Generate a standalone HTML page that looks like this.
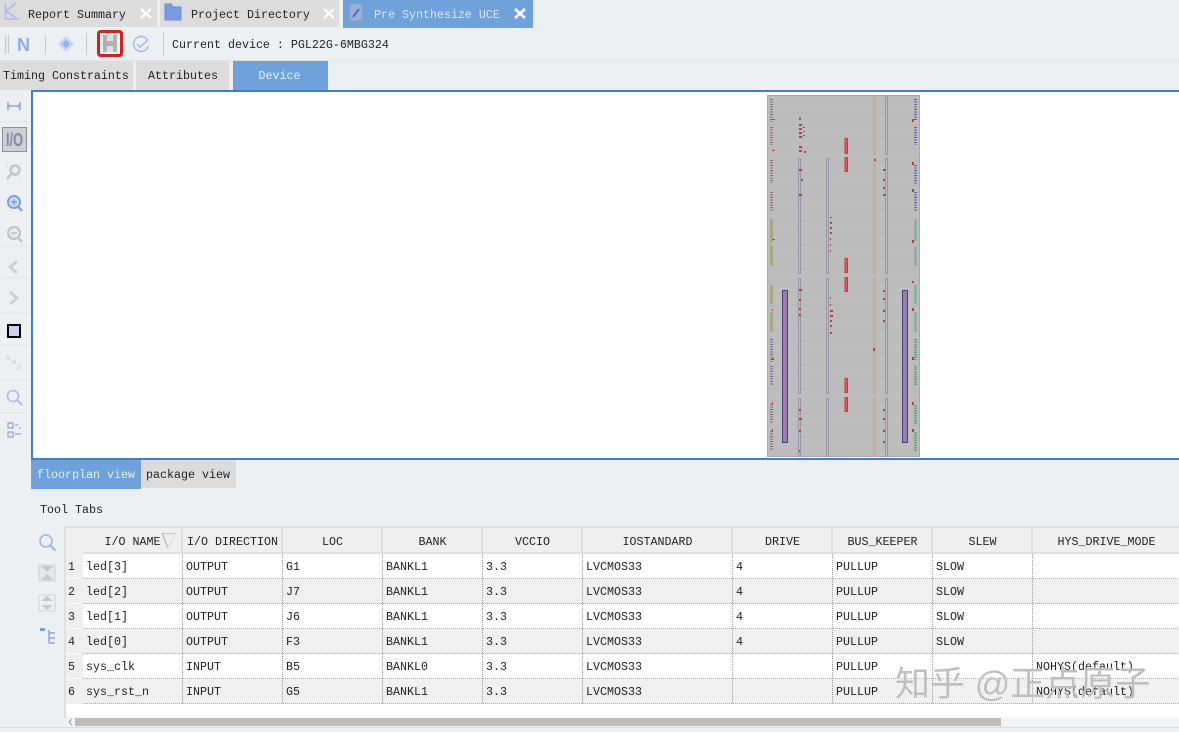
<!DOCTYPE html>
<html><head><meta charset="utf-8"><style>
html,body{margin:0;padding:0}
body{width:1179px;height:732px;position:relative;overflow:hidden;background:#ecf0f3;font:11.67px "Liberation Mono",monospace;color:#222}
div{position:absolute;box-sizing:border-box;white-space:pre}
.t{line-height:18px}
.tab{background:#dcdcdc}
.blue{background:#6fa2da;color:#e6eef8}
.h{height:26px;top:528px;line-height:29px;padding-left:1px;text-align:center;background:#efefef;border-right:2px solid #e0e0e0;border-bottom:2px solid #dfdfdf}
</style></head><body>
<!-- top tabs -->
<div class="tab" style="left:0;top:0;width:157px;height:27px"></div>
<div class="tab" style="left:160px;top:0;width:179px;height:27px"></div>
<div class="blue" style="left:343px;top:0;width:190px;height:28px"></div>
<div class="t" style="left:28px;top:6px">Report Summary</div>
<div class="t" style="left:191px;top:6px">Project Directory</div>
<div class="t" style="left:374px;top:6px;color:#dbe7f5">Pre Synthesize UCE</div>
<svg style="position:absolute;left:0;top:0" width="540" height="60">
<path d="M5.500 3V19H19M6 11L16 3M6 11L16 18" stroke="#b4bdea" stroke-width="1.800" fill="none"/>
<path d="M141 9l10 9M151 9l-10 9M324 9l10 9M334 9l-10 9" stroke="#fff" stroke-width="2.200"/>
<path d="M515 9l10 9M525 9l-10 9" stroke="#fff" stroke-width="2.600"/>
<path d="M165 4h6l2 3h8v13h-16z" fill="#7a9be0" stroke="#6a8cd2"/>
<rect x="350" y="4" width="12" height="17" rx="1" fill="#9ab2d8" stroke="#8fa0bd"/>
<path d="M353 17l6-8" stroke="#3f70c8" stroke-width="2"/>
<!-- toolbar -->
<path d="M5.500 35V54M8.500 35V54" stroke="#c4c8cb" stroke-width="1.200" fill="none"/>
<path d="M45.500 35V54M86.500 33V55M163.500 33V55" stroke="#c6cacd"/>
<path d="M66 36l8 8-8 8-8-8z" fill="#c6d4f4"/><path d="M66 40l4 4-4 4-4-4z" fill="#92aeea"/>
<rect x="98.500" y="31.500" width="23" height="24" rx="2" fill="none" stroke="#d3231f" stroke-width="3"/>
<path d="M103 35h14v17h-14z" fill="#b2b2b2"/><rect x="107" y="35" width="6" height="6" fill="#e0e0e0"/><rect x="107" y="46" width="6" height="6" fill="#e0e0e0"/>
<path d="M147.500 40a7.500 7.500 0 1 0 .8 6" stroke="#a8bde8" stroke-width="1.600" fill="none"/>
<path d="M137 44l3 3 8-7" stroke="#a8bde8" stroke-width="1.600" fill="none"/>
<text x="17" y="51" font-family="Liberation Sans" font-size="18" font-weight="700" fill="#8fabe4">N</text>
</svg>
<div class="t" style="left:172px;top:36px">Current device : PGL22G-6MBG324</div>
<div style="left:0;top:60px;width:1179px;height:1px;background:#dfe3e6"></div>
<!-- second tabs -->
<div class="tab" style="left:0;top:61px;width:133px;height:29px;line-height:31px;padding-left:3px">Timing Constraints</div>
<div class="tab" style="left:136px;top:61px;width:93px;height:29px;line-height:31px;padding-left:12px">Attributes</div>
<div class="blue" style="left:233px;top:61px;width:95px;height:30px;line-height:31px;text-align:center;padding-right:2px">Device</div>
<!-- canvas -->
<div style="left:31px;top:90px;width:1148px;height:370px;background:#fff;border:2px solid #3f7fc6;border-right:0"></div>
<!-- side toolbar -->
<div style="left:2px;top:127px;width:25px;height:25px;background:#ccd0d3;border:1px solid #8e9294"></div>
<svg style="position:absolute;left:0;top:90px" width="31" height="370">
<path d="M0 32H30M0 156H30M0 188H30M0 223H30M0 255H30M0 290H30M0 323H30" stroke="#e0e4e7"/>
<path d="M8 12V20M20 12V20M9 16H19" stroke="#8fa8d8" stroke-width="1.600"/><path d="M10 14l-2 2 2 2zM18 14l2 2-2 2z" fill="#8fa8d8"/>
<text x="14.500" y="56" font-family="Liberation Sans" font-size="18" font-weight="700" text-anchor="middle" textLength="17" lengthAdjust="spacingAndGlyphs" fill="#7d89a8">I/O</text>
<circle cx="15" cy="80" r="4.500" fill="none" stroke="#c2c5c6" stroke-width="2.500"/><path d="M11 84l-4 5" stroke="#c2c5c6" stroke-width="2.500"/><path d="M7 74v3M21 88v3M7 90h1M20 74h1" stroke="#d4d4d4"/>
<circle cx="14" cy="112" r="6" fill="#cfdaf5" stroke="#7f9ce0" stroke-width="2"/><path d="M18.500 117l3.500 4" stroke="#7f9ce0" stroke-width="2.400"/><path d="M11 112h6M14 109v6" stroke="#7f9ce0" stroke-width="1.400"/>
<circle cx="14" cy="143" r="6" fill="#e8eaea" stroke="#bfc2c2" stroke-width="2"/><path d="M18.500 148l3.500 4" stroke="#bfc2c2" stroke-width="2.400"/><path d="M11 143h6" stroke="#bfc2c2" stroke-width="1.400"/>
<path d="M17 171l-7 6 7 6" stroke="#cdd0d1" stroke-width="2.800" fill="none"/>
<path d="M10 202l7 6-7 6" stroke="#cdd0d1" stroke-width="2.800" fill="none"/>
<rect x="8" y="235" width="12" height="12" fill="#c6d4f4" stroke="#000" stroke-width="2"/>
<text x="6" y="270" font-size="6" fill="#c0c4c6" font-family="Liberation Sans">N</text><text x="12" y="274" font-size="6" fill="#c0c4c6" font-family="Liberation Sans">N</text><text x="17" y="280" font-size="6" fill="#c0c4c6" font-family="Liberation Sans">P</text>
<circle cx="13" cy="306" r="5.500" fill="none" stroke="#a9bde6" stroke-width="1.600"/><path d="M17 310l5 5" stroke="#a9bde6" stroke-width="2"/>
<path d="M8 333h5v5h-5zM8 342h5v5h-5z" fill="none" stroke="#8aa4dc" stroke-width="1.200"/><path d="M15 335h3M19 338h2M15 344h6" stroke="#8aa4dc" stroke-width="1.200"/>
</svg>
<!-- chip -->
<svg style="position:absolute;left:0;top:0" width="1179" height="470">
<rect x="767.500" y="95.500" width="152" height="361" fill="#bdbdbd" stroke="#a8a8a8"/>
<path d="M768 101H919M768 113H919M768 125H919M768 137H919M768 149H919M768 161H919M768 173H919M768 185H919M768 197H919M768 209H919M768 221H919M768 233H919M768 245H919M768 257H919M768 269H919M768 281H919M768 293H919M768 305H919M768 317H919M768 329H919M768 341H919M768 353H919M768 365H919M768 377H919M768 389H919M768 401H919M768 413H919M768 425H919M768 437H919M768 449H919" stroke="#b8b8b8" fill="none"/>
<!-- columns -->
<g fill="#bdbabf" stroke="#9a98a8">
<rect x="798.500" y="158.500" width="2" height="115"/><rect x="798.500" y="278.500" width="2" height="115"/><rect x="798.500" y="398.500" width="2" height="58"/>
<rect x="826.500" y="158.500" width="2" height="115"/><rect x="826.500" y="278.500" width="2" height="115"/><rect x="826.500" y="398.500" width="2" height="58"/>
<rect x="885.500" y="96.500" width="2" height="58"/><rect x="885.500" y="158.500" width="2" height="115"/><rect x="885.500" y="278.500" width="2" height="115"/><rect x="885.500" y="398.500" width="2" height="58"/>
</g>
<g fill="#cdb8a6" stroke="#cda58f">
<rect x="873.500" y="96.500" width="2" height="58"/><rect x="873.500" y="158.500" width="2" height="115"/><rect x="873.500" y="278.500" width="2" height="115"/><rect x="873.500" y="398.500" width="2" height="58"/>
</g>
<!-- red blocks -->
<g fill="#e2585a" stroke="#b5443f">
<rect x="845" y="138.500" width="2.500" height="15"/><rect x="845" y="157.500" width="2.500" height="14"/><rect x="845" y="258.500" width="2.500" height="14"/><rect x="845" y="277.500" width="2.500" height="14"/><rect x="845" y="378.500" width="2.500" height="14"/><rect x="845" y="397.500" width="2.500" height="14"/>
</g>
<!-- purple -->
<rect x="782.500" y="290.500" width="5" height="152" fill="#9a7eae" stroke="#4b3d78"/>
<rect x="902.500" y="290.500" width="5" height="152" fill="#9a7eae" stroke="#4b3d78"/>
<!-- IO strips -->
<g fill="none" stroke-width="3">
<path d="M771.500 99V122M771.500 127V145M771.500 160V183M771.500 192V212" stroke="#93686b" stroke-dasharray="1 1.500"/>
<path d="M771.500 219V243M771.500 246V266M771.500 285V304M771.500 312V332" stroke="#a6a882"/>
<path d="M771.500 339V362M771.500 366V385M771.500 404V423M771.500 431V451" stroke="#83647f" stroke-dasharray="1 1.500"/>
<path d="M915.500 99V120M915.500 127V145M915.500 165V185M915.500 192V212" stroke="#5a5a9c" stroke-dasharray="1 1.500"/>
<path d="M915.500 219V241M915.500 246V266M915.500 285V304M915.500 312V332" stroke="#92ada5"/>
<path d="M915.500 339V360M915.500 366V386M915.500 405V425M915.500 432V452" stroke="#6da077" stroke-dasharray="1.500 1"/>
</g>
<!-- red specks -->
<path d="M799 117h2v3h-2z" fill="#3f78c8"/>
<path d="M799 124h3v2h-3zM799 128h3v2h-3zM799 132h3v2h-3zM799 136h3v2h-3zM803 127h2v1h-2zM803 131h2v1h-2zM803 135h2v1h-2zM799 146h3v2h-3zM799 150h3v2h-3zM804 151h2v2h-2zM772 119h3v1h-3zM772 150h3v1h-3zM772 239h3v1h-3zM912 119h2v3h-2zM912 162h2v3h-2zM912 189h2v3h-2zM912 240h2v3h-2zM799 169h3v2h-3zM799 194h3v2h-3zM801 179h2v2h-2zM883 169h3v2h-3zM883 194h3v2h-3zM883 179h2v2h-2zM883 187h2v2h-2zM874 159h2v2h-2zM830 217h2v1h-2zM830 222h2v2h-2zM830 227h2v2h-2zM830 232h2v2h-2zM830 238h1v2h-1zM830 244h1v2h-1zM830 250h1v2h-1zM830 297h1v2h-1zM830 304h1v2h-1zM830 310h3v2h-3zM830 315h3v2h-3zM830 320h2v2h-2zM830 325h2v2h-2zM830 332h2v2h-2zM799 289h3v2h-3zM799 299h2v2h-2zM799 308h2v2h-2zM799 314h2v2h-2zM883 290h2v2h-2zM883 298h2v2h-2zM883 310h2v2h-2zM883 320h2v2h-2zM873 348h2v3h-2zM799 409h2v2h-2zM799 418h3v2h-3zM799 430h2v2h-2zM799 450h1v2h-1zM883 409h2v2h-2zM883 418h2v2h-2zM883 430h2v2h-2zM883 441h2v2h-2zM912 281h2v2h-2zM912 308h2v3h-2zM912 357h2v3h-2zM912 402h2v3h-2zM912 429h2v3h-2zM772 309h1v2h-1zM772 358h2v2h-2zM772 402h1v3h-1zM772 429h1v3h-1z" fill="#b34045"/>
</svg>
<!-- bottom tabs -->
<div class="blue" style="left:31px;top:460px;width:110px;height:29px;line-height:30px;padding-left:6px">floorplan view</div>
<div class="tab" style="left:141px;top:460px;width:95px;height:28px;line-height:30px;padding-left:5px">package view</div>
<div class="t" style="left:40px;top:501px">Tool Tabs</div>
<!-- table -->
<div style="left:64px;top:526px;width:1115px;height:192px;background:#fff;border-top:2px solid #dde1e4;border-left:2px solid #dde1e4"></div>
<div style="left:66px;top:528px;width:17px;height:176px;background:#efefef"></div>
<div class="h" style="left:83px;width:100px">I/O NAME</div>
<div class="h" style="left:183px;width:100px">I/O DIRECTION</div>
<div class="h" style="left:283px;width:100px">LOC</div>
<div class="h" style="left:383px;width:100px">BANK</div>
<div class="h" style="left:483px;width:100px">VCCIO</div>
<div class="h" style="left:583px;width:150px">IOSTANDARD</div>
<div class="h" style="left:733px;width:100px">DRIVE</div>
<div class="h" style="left:833px;width:100px">BUS_KEEPER</div>
<div class="h" style="left:933px;width:100px">SLEW</div>
<div class="h" style="left:1033px;width:146px;border-right:0">HYS_DRIVE_MODE</div>
<svg style="position:absolute;left:0;top:520px" width="190" height="130">
<path d="M162 13.500h14" stroke="#c4c4c4" fill="none"/><path d="M162 13l6 15" stroke="#a8a8a8" fill="none"/><path d="M168 28l8-15" stroke="#dcdcdc" fill="none"/>
<circle cx="46" cy="21" r="6" fill="none" stroke="#9bb6e8" stroke-width="1.600"/><path d="M50.500 25.500l5 5" stroke="#9bb6e8" stroke-width="2"/>
<path d="M39 45h16v16h-16z" fill="#e4e7e9" stroke="#d0d3d5"/><path d="M41 46h12l-6 6zM41 60h12l-6-6z" fill="#c6c9cb"/>
<path d="M39 75h16M39 91h16M39 75v16M55 75v16" stroke="#d0d3d5" fill="#e4e7e9"/><path d="M47 76l6 5H41zM47 90l6-5H41z" fill="#c6c9cb"/>
<path d="M40 108h5v3h-5z" fill="#7f9fdc"/><path d="M49 110v13M49 113h6M49 118h6M49 123h6" stroke="#8aa4dc" stroke-width="1.500" fill="none"/>
</svg>
<!-- rows -->
<div style="left:83px;top:579px;width:1096px;height:25px;background:#f0f0f0"></div>
<div style="left:83px;top:629px;width:1096px;height:25px;background:#f0f0f0"></div>
<div style="left:83px;top:679px;width:1096px;height:25px;background:#f0f0f0"></div>
<svg style="position:absolute;left:0;top:0" width="1179" height="732">
<path d="M83 578.500H1179M83 603.500H1179M83 628.500H1179M83 653.500H1179M83 678.500H1179M83 703.500H1179" stroke="#aaa" stroke-dasharray="1 1"/>
<path d="M182.500 554V704M282.500 554V704M382.500 554V704M482.500 554V704M582.500 554V704M732.500 554V704M832.500 554V704M932.500 554V704M1032.500 554V704" stroke="#999" stroke-dasharray="1 1"/>
<path d="M66 578.500H83M66 603.500H83M66 628.500H83M66 653.500H83M66 678.500H83" stroke="#fff"/>
</svg>
<div class="t" style="left:68px;top:558px">1</div><div class="t" style="left:68px;top:583px">2</div><div class="t" style="left:68px;top:608px">3</div><div class="t" style="left:68px;top:633px">4</div><div class="t" style="left:68px;top:658px">5</div><div class="t" style="left:68px;top:683px">6</div>
<div class="t" style="left:86px;top:558px">led[3]</div><div class="t" style="left:86px;top:583px">led[2]</div><div class="t" style="left:86px;top:608px">led[1]</div><div class="t" style="left:86px;top:633px">led[0]</div><div class="t" style="left:86px;top:658px">sys_clk</div><div class="t" style="left:86px;top:683px">sys_rst_n</div>
<div class="t" style="left:186px;top:558px">OUTPUT</div><div class="t" style="left:186px;top:583px">OUTPUT</div><div class="t" style="left:186px;top:608px">OUTPUT</div><div class="t" style="left:186px;top:633px">OUTPUT</div><div class="t" style="left:186px;top:658px">INPUT</div><div class="t" style="left:186px;top:683px">INPUT</div>
<div class="t" style="left:286px;top:558px">G1</div><div class="t" style="left:286px;top:583px">J7</div><div class="t" style="left:286px;top:608px">J6</div><div class="t" style="left:286px;top:633px">F3</div><div class="t" style="left:286px;top:658px">B5</div><div class="t" style="left:286px;top:683px">G5</div>
<div class="t" style="left:386px;top:558px">BANKL1</div><div class="t" style="left:386px;top:583px">BANKL1</div><div class="t" style="left:386px;top:608px">BANKL1</div><div class="t" style="left:386px;top:633px">BANKL1</div><div class="t" style="left:386px;top:658px">BANKL0</div><div class="t" style="left:386px;top:683px">BANKL1</div>
<div class="t" style="left:486px;top:558px">3.3</div><div class="t" style="left:486px;top:583px">3.3</div><div class="t" style="left:486px;top:608px">3.3</div><div class="t" style="left:486px;top:633px">3.3</div><div class="t" style="left:486px;top:658px">3.3</div><div class="t" style="left:486px;top:683px">3.3</div>
<div class="t" style="left:586px;top:558px">LVCMOS33</div><div class="t" style="left:586px;top:583px">LVCMOS33</div><div class="t" style="left:586px;top:608px">LVCMOS33</div><div class="t" style="left:586px;top:633px">LVCMOS33</div><div class="t" style="left:586px;top:658px">LVCMOS33</div><div class="t" style="left:586px;top:683px">LVCMOS33</div>
<div class="t" style="left:736px;top:558px">4</div><div class="t" style="left:736px;top:583px">4</div><div class="t" style="left:736px;top:608px">4</div><div class="t" style="left:736px;top:633px">4</div>
<div class="t" style="left:836px;top:558px">PULLUP</div><div class="t" style="left:836px;top:583px">PULLUP</div><div class="t" style="left:836px;top:608px">PULLUP</div><div class="t" style="left:836px;top:633px">PULLUP</div><div class="t" style="left:836px;top:658px">PULLUP</div><div class="t" style="left:836px;top:683px">PULLUP</div>
<div class="t" style="left:936px;top:558px">SLOW</div><div class="t" style="left:936px;top:583px">SLOW</div><div class="t" style="left:936px;top:608px">SLOW</div><div class="t" style="left:936px;top:633px">SLOW</div>
<div class="t" style="left:1036px;top:658px">NOHYS(default)</div><div class="t" style="left:1036px;top:683px">NOHYS(default)</div>
<!-- watermark -->
<div style="left:895px;top:665px;font:35px/40px 'Liberation Sans','Noto Sans CJK SC',sans-serif;color:rgba(185,185,185,.92);text-shadow:0 0 1px #fff">知乎 @正点原子</div>
<!-- scrollbar -->
<div style="left:66px;top:717px;width:1113px;height:9px;background:#f3f4f5"></div>
<div style="left:75px;top:718px;width:926px;height:8px;background:#bcbcbc"></div>
<svg style="position:absolute;left:66px;top:718px" width="9" height="8"><path d="M6 1L3 4l3 3" stroke="#999" fill="none"/></svg>
<div style="left:0;top:727px;width:1179px;height:1px;background:#dcdfe2"></div>
</body></html>
